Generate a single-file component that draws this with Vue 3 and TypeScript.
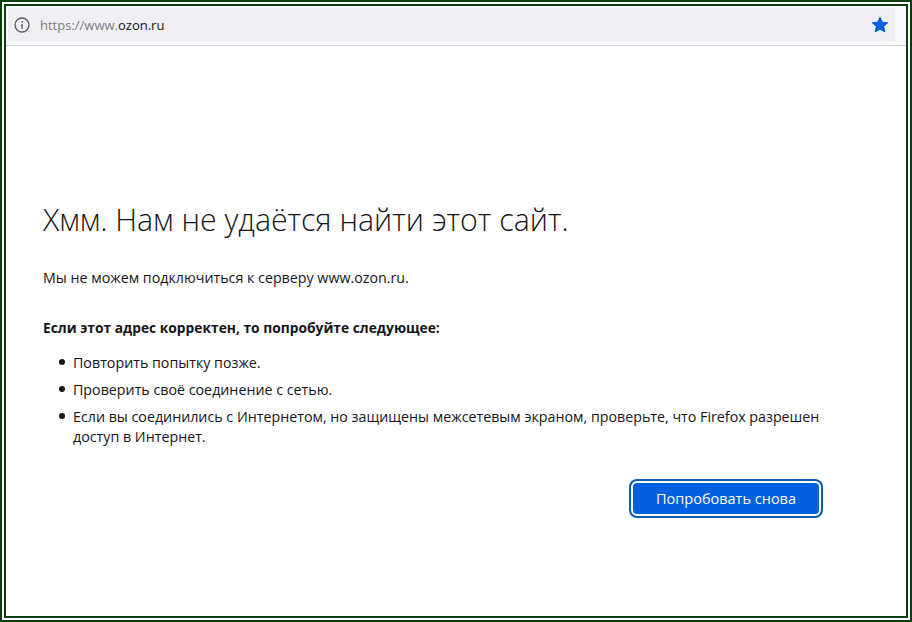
<script setup lang="ts">
const tips: string[] = [
  'Повторить попытку позже.',
  'Проверить своё соединение с сетью.',
  'Если вы соединились с Интернетом, но защищены межсетевым экраном, проверьте, что Firefox разрешен доступ в Интернет.',
]
</script>

<template>
  <div class="outer">
    <div class="inner">
      <header class="bar">
        <div class="field">
          <svg class="info" width="16" height="16" viewBox="0 0 16 16" fill="none">
            <circle cx="8" cy="8" r="7" stroke="#5b5b66" stroke-width="1.3" />
            <rect x="7.3" y="7" width="1.4" height="4.800" fill="#5b5b66" />
            <rect x="7.3" y="4" width="1.4" height="1.6" fill="#5b5b66" />
          </svg>
          <span class="url"><span class="muted">https://www.</span>ozon.ru</span>
          <svg class="star" width="18" height="18" viewBox="0 0 18 18">
            <path d="M9 1.2l2.3 5 5.400.6-4 3.700 1.100 5.400L9 13.200l-4.800 2.700 1.100-5.400-4-3.700 5.400-.6z" fill="#0060df" stroke="#0060df" stroke-width="1" stroke-linejoin="round" />
          </svg>
        </div>
      </header>
      <main class="page">
        <h1>Хмм. Нам не удаётся найти этот сайт.</h1>
        <p class="lead">Мы не можем подключиться к серверу www.ozon.ru.</p>
        <p class="strong">Если этот адрес корректен, то попробуйте следующее:</p>
        <ul>
          <li v-for="tip in tips" :key="tip">{{ tip }}</li>
        </ul>
        <div class="actions">
          <button type="button">Попробовать снова</button>
        </div>
      </main>
    </div>
  </div>
</template>

<style>
html, body { margin: 0; background: #fff; }
</style>

<style scoped>
.outer {
  width: 912px;
  height: 622px;
  box-sizing: border-box;
  border: 2px solid #0c3d0c;
  padding: 2px;
  background: #fff;
  font-family: "Open Sans", "Noto Sans", sans-serif;
  color: #15141a;
  overflow: hidden;
}
.inner {
  height: 100%;
  box-sizing: border-box;
  border: 2px solid #0c3d0c;
  background: #fff;
}
.bar {
  height: 40px;
  box-sizing: border-box;
  background: #f9f9fb;
  border-bottom: 1px solid #d0d0d4;
  padding: 2px 11px 4px 2px;
  display: flex;
}
.field {
  flex: 1;
  background: #f0f0f4;
  display: flex;
  align-items: center;
  padding: 1px 0 0 6px;
}
.info { flex: none; }
.url {
  margin-left: 10px;
  font-size: 13px;
  color: #15141a;
  flex: 1;
}
.muted { color: #7b7b85; }
.star { flex: none; margin-right: 6px; }
.page {
  padding: 154px 70px 0 37px;
}
h1 {
  margin: 0;
  font-size: 30.300px;
  font-weight: 300;
  line-height: 40px;
  color: #15141a;
}
.lead {
  margin: 28px 0 0;
  font-size: 14.250px;
  line-height: 20px;
}
.strong {
  margin: 30px 0 0;
  font-size: 13.800px;
  font-weight: 700;
  line-height: 20px;
}
ul {
  list-style: none;
  margin: 15px 0 0;
  padding: 0 0 0 16px;
}
li {
  display: flex;
  gap: 8px;
  font-size: 14.250px;
  line-height: 20px;
  margin-bottom: 7px;
}
li::before {
  content: "";
  flex: none;
  width: 6px;
  height: 6px;
  margin-top: 6px;
  border-radius: 50%;
  background: #15141a;
}
.actions {
  display: flex;
  justify-content: flex-end;
  margin-top: 36px;
  padding-right: 17px;
}
button {
  width: 186px;
  height: 31px;
  box-sizing: border-box;
  background: #0060df;
  color: #fbfbfe;
  border: 0;
  border-radius: 4px;
  outline: 2px solid #fff;
  box-shadow: 0 0 0 4px #0a5cb5;
  font-family: inherit;
  font-size: 14.500px;
  font-weight: 500;
  padding: 0;
}
</style>
